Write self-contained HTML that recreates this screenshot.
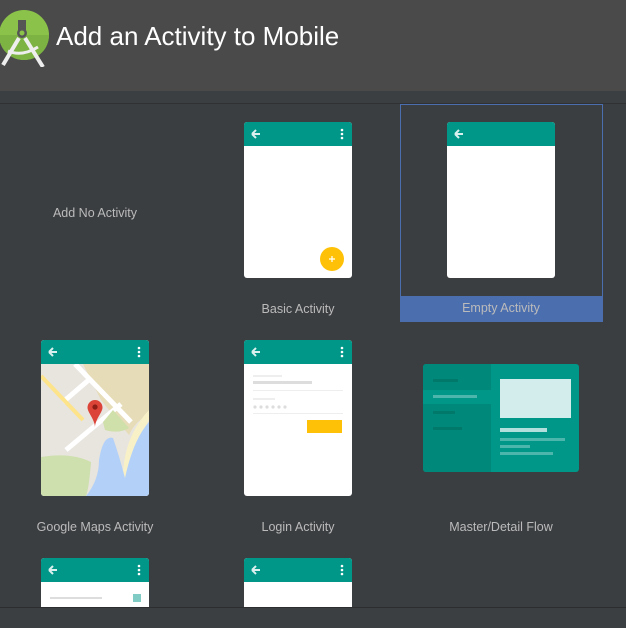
<!DOCTYPE html>
<html style="width:626px;height:628px;overflow:hidden"><head><style>
*{margin:0;padding:0;box-sizing:border-box}
body{width:626px;height:628px;background:#3b3e41;position:relative;overflow:hidden;font-family:"Liberation Sans",sans-serif}
.a{position:absolute}
.card{position:absolute;width:108px;height:156px;background:#fff;border-radius:3px;overflow:hidden}
.lbl{position:absolute;color:#bbbbbb;font-size:12.5px;text-align:center;width:200px}
</style></head><body>
<div class="a" style="left:0;top:0;width:626px;height:91px;background:#4a4a4a"></div>
<div class="a" style="left:0;top:91px;width:626px;height:12px;background:#3c3f41"></div>
<div class="a" style="left:0;top:103px;width:626px;height:1px;background:#2f3133"></div>
<svg class="a" style="left:0;top:5px" width="52" height="62" viewBox="0 0 52 62">
<circle cx="24" cy="30" r="25" fill="#8bc34a"/>
<path d="M-1 30 A25 25 0 0 0 49 30 Z" fill="#7cb342"/>
<rect x="18" y="15" width="8" height="10" fill="#555"/>
<circle cx="22" cy="28" r="5" fill="#555"/>
<circle cx="22" cy="28" r="2.5" fill="#8bc34a"/>
<path d="M19 33 L3 60" stroke="#eee" stroke-width="4"/>
<path d="M25 33 L43 62" stroke="#eee" stroke-width="4"/>
<path d="M8 46 Q22 52 38 42" stroke="#eee" stroke-width="3" fill="none"/>
</svg>
<div class="a" style="left:56px;top:21px;color:#fff;font-size:26px">Add an Activity to Mobile</div>

<div class="lbl" style="left:-5px;top:206px">Add No Activity</div>

<svg width="0" height="0" style="position:absolute"><defs>
<g id="back"><path d="M8 12 H16 M8 12 L12 8 M8 12 L12 16" stroke="#d9f0ee" stroke-width="2" fill="none"/></g>
<g id="dots"><circle cx="98" cy="8" r="1.3" fill="#fff"/><circle cx="98" cy="12" r="1.3" fill="#fff"/><circle cx="98" cy="16" r="1.3" fill="#fff"/></g>
</defs></svg>

<div class="card" style="left:244px;top:122px"><svg width="108" height="156"><rect width="108" height="24" fill="#009688"/><use href="#back"/><use href="#dots"/><circle cx="88" cy="137" r="12" fill="#ffc107"/><path d="M85 137h6M88 134v6" stroke="#fff" stroke-width="1.2"/></svg></div>
<div class="lbl" style="left:198px;top:302px">Basic Activity</div>

<div class="a" style="left:400px;top:104px;width:203px;height:218px;border:1px solid #4b6eaf"></div>
<div class="a" style="left:400px;top:296px;width:203px;height:26px;background:#4b6eaf"></div>
<div class="card" style="left:447px;top:122px"><svg width="108" height="156"><rect width="108" height="24" fill="#009688"/><use href="#back"/></svg></div>
<div class="lbl" style="left:401px;top:301px">Empty Activity</div>

<div class="card" style="left:41px;top:340px"><svg width="108" height="156">
<rect width="108" height="156" fill="#e8e4de"/>
<path d="M42 24 H108 V75 Q95 80 88 95 L60 60 Z" fill="#e6dcb8"/>
<path d="M34 24 L90 82" stroke="#fff" stroke-width="5"/>
<path d="M22 62 L50 38" stroke="#fff" stroke-width="5"/>
<path d="M0 36 L42 80" stroke="#fde38a" stroke-width="4"/>
<path d="M25 110 L80 64" stroke="#fff" stroke-width="5"/>
<path d="M62 82 L72 70 L88 88 Q78 94 64 90 Z" fill="#cfe0aa"/>
<path d="M82 145 Q80 100 108 70 V80 Q90 110 88 145 Z" fill="#f8f1c8"/>
<path d="M45 156 Q58 140 58 120 Q62 95 72 98 Q78 115 84 138 Q92 100 108 82 V156 Z" fill="#b3d1f8"/>
<path d="M0 117 Q30 112 50 122 Q48 148 45 156 H0 Z" fill="#cde0ad"/>
<path d="M54 60 a7.5 7.5 0 0 1 7.5 7.5 c0 5 -7.5 12 -7.5 20 c0 -8 -7.5 -15 -7.5 -20 a7.5 7.5 0 0 1 7.5 -7.5z" fill="#db4437"/>
<circle cx="54" cy="67" r="2.6" fill="#8b1e16"/>
<rect width="108" height="24" fill="#009688"/><use href="#back"/><use href="#dots"/></svg></div>
<div class="lbl" style="left:-5px;top:520px">Google Maps Activity</div>

<div class="card" style="left:244px;top:340px"><svg width="108" height="156">
<rect width="108" height="24" fill="#009688"/><use href="#back"/><use href="#dots"/>
<rect x="9" y="35" width="29" height="2" fill="#eee"/>
<rect x="9" y="41" width="59" height="3" fill="#ddd"/>
<rect x="9" y="50" width="90" height="1" fill="#eee"/>
<rect x="9" y="58" width="22" height="2" fill="#eee"/>
<g fill="#ddd"><circle cx="11" cy="67" r="1.6"/><circle cx="17" cy="67" r="1.6"/><circle cx="23" cy="67" r="1.6"/><circle cx="29" cy="67" r="1.6"/><circle cx="35" cy="67" r="1.6"/><circle cx="41" cy="67" r="1.6"/></g>
<rect x="9" y="73" width="90" height="1" fill="#eee"/>
<rect x="63" y="80" width="35" height="13" fill="#ffc107"/></svg></div>
<div class="lbl" style="left:198px;top:520px">Login Activity</div>

<div class="a" style="left:423px;top:364px;width:156px;height:108px;border-radius:3px;overflow:hidden"><svg width="156" height="108">
<rect width="156" height="108" fill="#009688"/>
<rect width="68" height="108" fill="#00897b"/>
<rect y="26" width="68" height="14" fill="#009688"/>
<rect x="10" y="15" width="25" height="3" fill="#00796b"/>
<rect x="10" y="31" width="44" height="3" fill="#4db6ac"/>
<rect x="10" y="47" width="22" height="3" fill="#00796b"/>
<rect x="10" y="63" width="29" height="3" fill="#00796b"/>
<rect x="77" y="15" width="71" height="39" fill="#d3ecec"/>
<rect x="77" y="64" width="47" height="4" fill="#b2dfdb"/>
<rect x="77" y="74" width="65" height="3" fill="#4db6ac"/>
<rect x="77" y="81" width="30" height="3" fill="#4db6ac"/>
<rect x="77" y="88" width="53" height="3" fill="#4db6ac"/></svg></div>
<div class="lbl" style="left:401px;top:520px">Master/Detail Flow</div>

<div class="card" style="left:41px;top:558px;height:49px;border-radius:3px 3px 0 0"><svg width="108" height="49"><rect width="108" height="24" fill="#009688"/><use href="#back"/><use href="#dots"/><rect x="9" y="39" width="52" height="2" fill="#ddd"/><rect x="92" y="36" width="8" height="8" fill="#80cbc4"/></svg></div>
<div class="card" style="left:244px;top:558px;height:49px;border-radius:3px 3px 0 0"><svg width="108" height="49"><rect width="108" height="24" fill="#009688"/><use href="#back"/><use href="#dots"/></svg></div>

<div class="a" style="left:0;top:607px;width:626px;height:21px;background:#3c3f41;border-top:1px solid #2b2d2f"></div>
</body></html>
